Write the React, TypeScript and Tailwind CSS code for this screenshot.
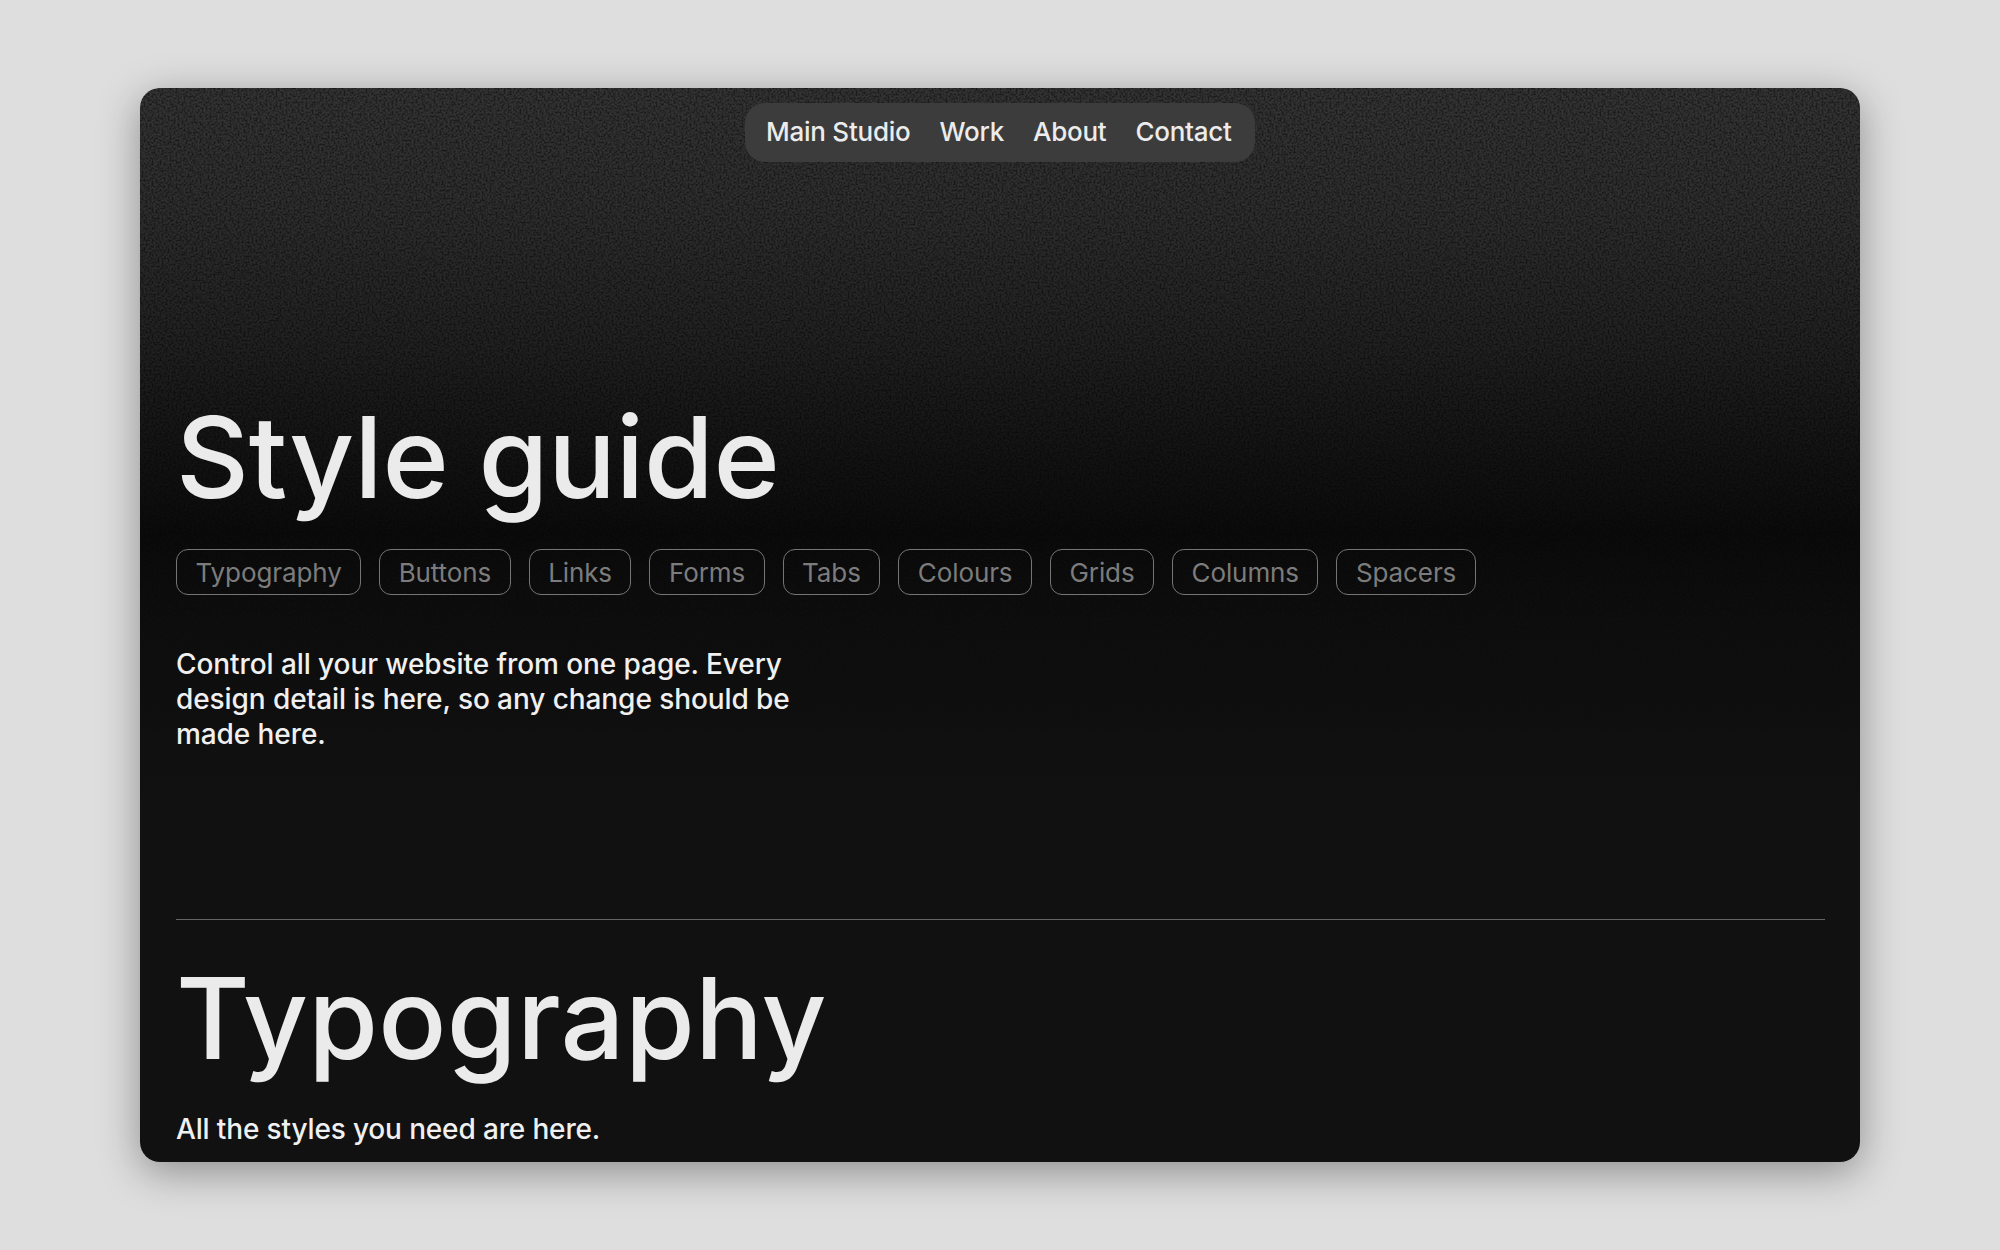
const navLinks = ['Main Studio', 'Work', 'About', 'Contact'];
const tags = ['Typography', 'Buttons', 'Links', 'Forms', 'Tabs', 'Colours', 'Grids', 'Columns', 'Spacers'];

function Grain() {
  return (
    <svg
      className="absolute inset-0 h-full w-full [mask-image:linear-gradient(to_bottom,black_0%,black_30%,transparent_60%)]"
      aria-hidden="true"
    >
      <filter id="grain">
        <feTurbulence type="fractalNoise" baseFrequency="0.5" numOctaves="3" seed="4" />
        <feColorMatrix values="0 0 0 0 0  0 0 0 0 0  0 0 0 0 0  3.2 0 0 0 -1.25" />
      </filter>
      <rect width="100%" height="100%" filter="url(#grain)" opacity="0.45" />
    </svg>
  );
}

export default function App() {
  return (
    <div className="flex h-[1250px] justify-center bg-[#dedede] pt-[88px] font-['Inter',sans-serif]">
      <div className="relative h-[1074px] w-[1720px] overflow-hidden rounded-[20px] bg-[linear-gradient(to_bottom,#343434_0px,#2e2e2e_120px,#222222_250px,#131313_370px,#0b0b0b_445px,#0e0e0e_530px,#111111_730px)] shadow-[0_10px_42px_rgba(0,0,0,0.36)]">
        <Grain />

        <div className="relative flex flex-col px-9">
          {/* Nav */}
          <div className="flex justify-center pt-[15px]">
            <nav className="flex h-[59px] w-[510px] items-center gap-[29px] rounded-[20px] bg-[#3c3c3c] px-[21px] pb-[2px] text-[26px] font-[450] tracking-[-0.25px] text-[#ececec]">
              {navLinks.map((link) => (
                <a key={link} className="whitespace-nowrap">
                  {link}
                </a>
              ))}
            </nav>
          </div>

          {/* Style guide */}
          <h1 className="mt-[233px] text-[113px] leading-[125px] font-[450] tracking-[-0.3px] text-[#ebebeb]">Style guide</h1>

          <div className="mt-[29px] flex gap-[18px]">
            {tags.map((tag) => (
              <span
                key={tag}
                className="flex h-[46px] items-center rounded-[12px] border border-[#757575] px-[18.5px] text-[26px] tracking-[-0.1px] whitespace-nowrap text-[#7c7c7c]"
              >
                {tag}
              </span>
            ))}
          </div>

          <p className="mt-[52px] w-[640px] text-[28px] leading-[35px] font-medium tracking-[-0.08px] text-[#f0f0f0]">
            Control all your website from one page. Every design detail is here, so any change should be made here.
          </p>

          <hr className="mt-[167px] -mr-px border-t border-[#666666]" />

          {/* Typography */}
          <h2 className="mt-[36px] text-[113px] leading-[125px] font-[450] tracking-[0.25px] text-[#ebebeb]">Typography</h2>
          <p className="mt-[31px] text-[28px] leading-[35px] font-medium tracking-[-0.15px] text-[#f0f0f0]">All the styles you need are here.</p>
        </div>
      </div>
    </div>
  );
}
